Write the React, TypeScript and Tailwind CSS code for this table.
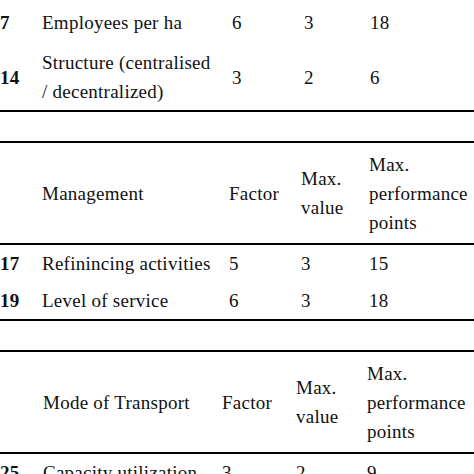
import React from "react";

const Line = () => <div className="h-[2px] w-full bg-black" />;

type Row = { n: string; label: React.ReactNode; f: string; v: string; p: string; h: string };

function Rows({ rows, cols }: { rows: Row[]; cols: string }) {
  return (
    <>
      {rows.map((r) => (
        <div key={r.n} className={`grid ${cols} items-center ${r.h}`}>
          <div className="font-bold">{r.n}</div>
          <div className="whitespace-nowrap">{r.label}</div>
          <div>{r.f}</div>
          <div>{r.v}</div>
          <div>{r.p}</div>
        </div>
      ))}
    </>
  );
}

function Header({ title, cols }: { title: string; cols: string }) {
  return (
    <div className={`grid ${cols} items-center h-[100px]`}>
      <div />
      <div className="whitespace-nowrap">{title}</div>
      <div>Factor</div>
      <div>
        Max.
        <br />
        value
      </div>
      <div className="whitespace-nowrap">
        Max.
        <br />
        performance
        <br />
        points
      </div>
    </div>
  );
}

export default function App() {
  const c1 = "grid-cols-[42px_190px_72px_66px_1fr]";
  const c2 = "grid-cols-[42px_187px_72px_68px_1fr]";
  const c3 = "grid-cols-[43px_179px_74px_71px_1fr]";
  return (
    <div
      className="w-[474px] h-[474px] overflow-hidden bg-white text-[#111] text-[19px] leading-[29px] tracking-[0.25px]"
      style={{ fontFamily: '"Liberation Serif", "Times New Roman", serif' }}
    >
      <Rows
        cols={c1}
        rows={[
          { n: "7", label: "Employees per ha", f: "6", v: "3", p: "18", h: "h-[44px]" },
          {
            n: "14",
            label: (
              <>
                Structure (centralised
                <br />/ decentralized)
              </>
            ),
            f: "3",
            v: "2",
            p: "6",
            h: "h-[66px]",
          },
        ]}
      />
      <Line />
      <div className="h-[29px]" />
      <Line />
      <Header title="Management" cols={c2} />
      <Line />
      <Rows
        cols={c2}
        rows={[
          { n: "17", label: "Refinincing activities", f: "5", v: "3", p: "15", h: "h-[37px]" },
          { n: "19", label: "Level of service", f: "6", v: "3", p: "18", h: "h-[37px]" },
        ]}
      />
      <Line />
      <div className="h-[29px]" />
      <Line />
      <Header title="Mode of Transport" cols={c3} />
      <Line />
      <Rows
        cols={c3}
        rows={[
          { n: "25", label: "Capacity utilization", f: "3", v: "2", p: "9", h: "h-[37px]" },
        ]}
      />
    </div>
  );
}
